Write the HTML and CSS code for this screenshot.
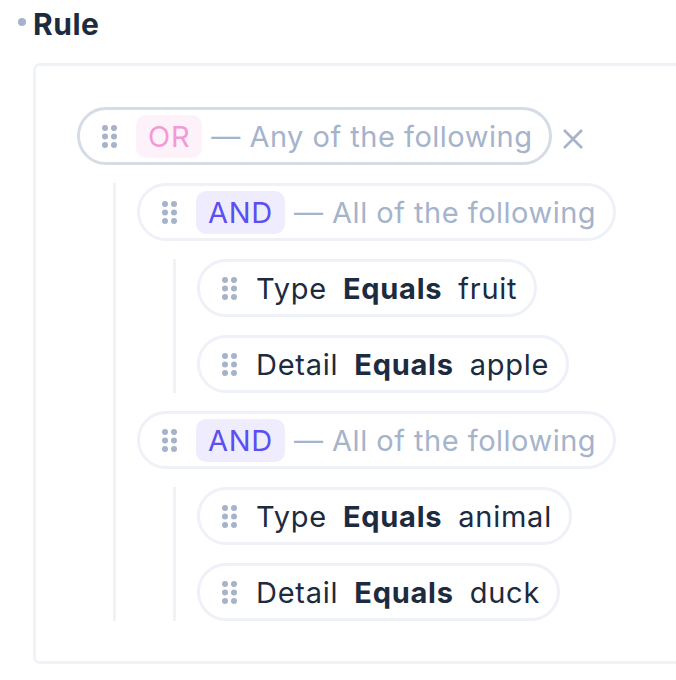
FILE: index.html
```html
<!DOCTYPE html>
<html>
<head>
    <title>Rule builder</title>
    <link rel="stylesheet" href="styles.css">
</head>
<body>
    <h2 class="rule-title">Rule</h2>

    <div class="rule-frame">
        <div class="group">
            <div class="group-row">
                <div class="pill pill-active">
                    <svg class="grip" viewBox="0 0 15 23"><circle cx="3" cy="3" r="3"/><circle cx="12" cy="3" r="3"/><circle cx="3" cy="11.5" r="3"/><circle cx="12" cy="11.5" r="3"/><circle cx="3" cy="20" r="3"/><circle cx="12" cy="20" r="3"/></svg>
                    <span class="label"><span class="badge badge-or">OR</span> <span class="muted">— Any of the following</span></span>
                </div>
                <svg class="remove" viewBox="0 0 24 24"><path d="M3 3 L21 21 M21 3 L3 21"/></svg>
            </div>

            <div class="children">
                <div class="group">
                    <div class="group-row">
                        <div class="pill">
                            <svg class="grip" viewBox="0 0 15 23"><circle cx="3" cy="3" r="3"/><circle cx="12" cy="3" r="3"/><circle cx="3" cy="11.5" r="3"/><circle cx="12" cy="11.5" r="3"/><circle cx="3" cy="20" r="3"/><circle cx="12" cy="20" r="3"/></svg>
                            <span class="label"><span class="badge badge-and">AND</span> <span class="muted">— All of the following</span></span>
                        </div>
                    </div>
                    <div class="children">
                        <div class="pill">
                            <svg class="grip" viewBox="0 0 15 23"><circle cx="3" cy="3" r="3"/><circle cx="12" cy="3" r="3"/><circle cx="3" cy="11.5" r="3"/><circle cx="12" cy="11.5" r="3"/><circle cx="3" cy="20" r="3"/><circle cx="12" cy="20" r="3"/></svg>
                            <span class="cond">Type</span><span class="cond op">Equals</span><span class="cond">fruit</span>
                        </div>
                        <div class="pill">
                            <svg class="grip" viewBox="0 0 15 23"><circle cx="3" cy="3" r="3"/><circle cx="12" cy="3" r="3"/><circle cx="3" cy="11.5" r="3"/><circle cx="12" cy="11.5" r="3"/><circle cx="3" cy="20" r="3"/><circle cx="12" cy="20" r="3"/></svg>
                            <span class="cond">Detail</span><span class="cond op">Equals</span><span class="cond">apple</span>
                        </div>
                    </div>
                </div>

                <div class="group">
                    <div class="group-row">
                        <div class="pill">
                            <svg class="grip" viewBox="0 0 15 23"><circle cx="3" cy="3" r="3"/><circle cx="12" cy="3" r="3"/><circle cx="3" cy="11.5" r="3"/><circle cx="12" cy="11.5" r="3"/><circle cx="3" cy="20" r="3"/><circle cx="12" cy="20" r="3"/></svg>
                            <span class="label"><span class="badge badge-and">AND</span> <span class="muted">— All of the following</span></span>
                        </div>
                    </div>
                    <div class="children">
                        <div class="pill">
                            <svg class="grip" viewBox="0 0 15 23"><circle cx="3" cy="3" r="3"/><circle cx="12" cy="3" r="3"/><circle cx="3" cy="11.5" r="3"/><circle cx="12" cy="11.5" r="3"/><circle cx="3" cy="20" r="3"/><circle cx="12" cy="20" r="3"/></svg>
                            <span class="cond">Type</span><span class="cond op">Equals</span><span class="cond">animal</span>
                        </div>
                        <div class="pill">
                            <svg class="grip" viewBox="0 0 15 23"><circle cx="3" cy="3" r="3"/><circle cx="12" cy="3" r="3"/><circle cx="3" cy="11.5" r="3"/><circle cx="12" cy="11.5" r="3"/><circle cx="3" cy="20" r="3"/><circle cx="12" cy="20" r="3"/></svg>
                            <span class="cond">Detail</span><span class="cond op">Equals</span><span class="cond">duck</span>
                        </div>
                    </div>
                </div>
            </div>
        </div>
    </div>
</body>
</html>
```

FILE: styles.css
```css
html, body {
    overflow: hidden;
}
body {
    font-family: Inter, 'Noto Sans', sans-serif;
    background: #fff;
    color: #1c2b40;
    margin: 0;
    padding: 0;
}
.rule-title {
    display: flex;
    align-items: center;
    font-size: 30px;
    line-height: 36px;
    font-weight: 700;
    letter-spacing: 0.5px;
    margin: 6px 0 21px 18px;
}
.rule-title::before {
    content: '';
    width: 8px;
    height: 8px;
    border-radius: 50%;
    background: #a6b3ca;
    margin-right: 7px;
    margin-top: -4px;
}
.rule-frame {
    margin-left: 33px;
    margin-right: -40px;
    border: 3px solid #eff2f7;
    border-radius: 7px;
    padding: 41px 0 40px 41px;
}
.group {
    display: flex;
    flex-direction: column;
    align-items: flex-start;
}
.group-row {
    display: flex;
    align-items: center;
}
.children {
    display: flex;
    flex-direction: column;
    align-items: flex-start;
    gap: 18px;
    margin: 18px 0 0 36px;
    padding-left: 21px;
    border-left: 3px solid #eff2f7;
}
.pill {
    display: flex;
    align-items: center;
    box-sizing: border-box;
    height: 58px;
    padding: 0 17px 0 22px;
    border: 3px solid #eef1f7;
    border-radius: 29px;
    font-size: 29px;
    letter-spacing: 0.75px;
    white-space: nowrap;
}
.pill-active {
    border-color: #d6dce6;
}
.grip {
    width: 15px;
    height: 23px;
    fill: #a6b3ca;
    margin-right: 19px;
    flex: none;
}
.badge {
    display: inline-block;
    height: 43px;
    line-height: 43px;
    padding: 0 12px;
    border-radius: 10px;
}
.badge-or {
    color: #f29ad6;
    background: #fdf2fa;
}
.badge-and {
    color: #5a4ef4;
    background: #efedfd;
}
.muted {
    color: #a5b3cb;
    letter-spacing: 0.5px;
}
.cond {
    margin-right: 16px;
}
.cond:last-child {
    margin-right: 0;
}
.op {
    font-weight: 700;
}
.remove {
    width: 24px;
    height: 24px;
    margin: 5px 0 0 9px;
    stroke: #a6b3ca;
    stroke-width: 2.6;
    fill: none;
}
```
